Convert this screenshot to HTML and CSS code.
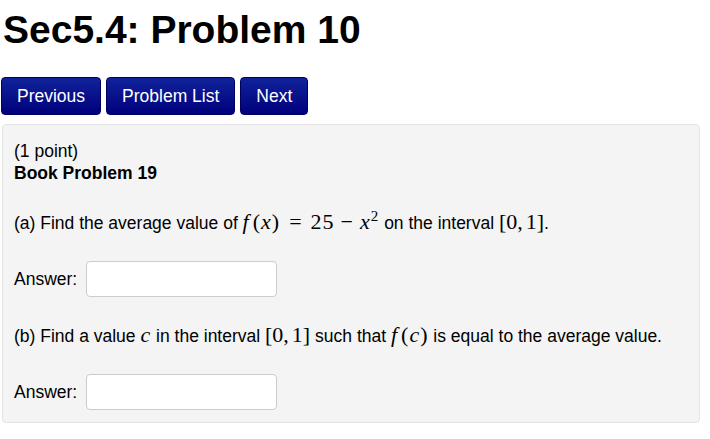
FILE: index.html
```html
<!DOCTYPE html>
<html lang="en">
<head>
    <meta charset="UTF-8">
    <title>Sec5.4: Problem 10</title>
    <link rel="stylesheet" href="styles.css">
</head>
<body>
    <h1 class="title">Sec5.4: Problem 10</h1>
    <div class="nav">
        <button class="navBtn">Previous</button>
        <button class="navBtn">Problem List</button>
        <button class="navBtn">Next</button>
    </div>
    <div class="problem">
        <div class="points">(1 point)</div>
        <div class="book">Book Problem 19</div>
        <p class="question">(a) Find the average value of
            <span class="math"><i class="fn">f</i>(<i>x</i>)<span class="rel">=</span>25<span class="op">&minus;</span><i>x</i><sup>2</sup></span>
            on the interval <span class="math interval">[0,<span class="sp"></span>1]</span>.</p>
        <div class="answer">
            <label>Answer:</label>
            <input type="text" class="answerBox">
        </div>
        <p class="question">(b) Find a value <span class="math"><i>c</i></span> in the interval
            <span class="math interval">[0,<span class="sp"></span>1]</span> such that <span class="math"><i class="fn">f</i>(<i>c</i>)</span> is equal to the average value.</p>
        <div class="answer">
            <label>Answer:</label>
            <input type="text" class="answerBox">
        </div>
    </div>
</body>
</html>
```

FILE: styles.css
```css
body {
    font-family: "Liberation Sans", Arial, sans-serif;
    font-size: 17.5px;
    color: #000;
    margin: 0;
    padding: 0 10px 0 2px;
    background: #fff;
}
.title {
    font-size: 39px;
    font-weight: bold;
    margin: 0 0 0 1px;
    padding-top: 9px;
    line-height: 42px;
}
.nav {
    display: flex;
    gap: 5px;
    margin-top: 26px;
    margin-left: -1px;
}
.navBtn {
    font-family: "Liberation Sans", Arial, sans-serif;
    font-size: 17.5px;
    color: #fff;
    height: 38px;
    padding: 0 15px;
    border: 1px solid #00005e;
    border-radius: 4px;
    background: linear-gradient(#10239a, #00007c);
    cursor: pointer;
}
.problem {
    margin-top: 9px;
    background-color: #f4f4f4;
    border: 1px solid #e3e3e3;
    border-radius: 4px;
    padding: 15px 11px 12px;
    width: 674px;
}
.points, .book {
    line-height: 22px;
}
.book {
    font-weight: bold;
}
.question {
    margin: 27px 0 0;
    line-height: 22px;
}
.math {
    font-family: "Liberation Serif", "Times New Roman", serif;
    font-size: 22px;
    line-height: 1;
    letter-spacing: 1px;
}
.math.interval {
    letter-spacing: 0;
}
.math .fn {
    margin-right: 3px;
}
.math .rel {
    margin: 0 8px 0 9px;
}
.math .op {
    margin: 0 6px;
}
.math .sp {
    display: inline-block;
    width: 3px;
}
.math sup {
    font-size: 15px;
    line-height: 0;
}
.answer {
    display: flex;
    align-items: center;
    gap: 9px;
    margin-top: 27px;
}
.answerBox {
    width: 191px;
    height: 36px;
    box-sizing: border-box;
    border: 1px solid #ccc;
    border-radius: 4px;
    background: #fff;
}
```
